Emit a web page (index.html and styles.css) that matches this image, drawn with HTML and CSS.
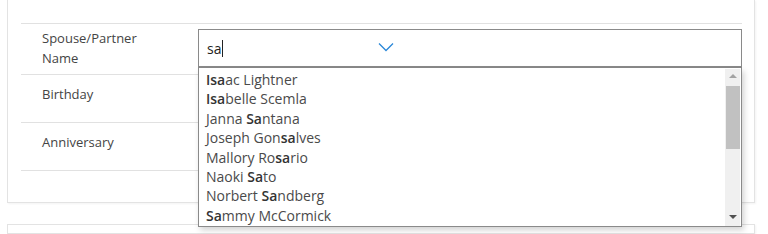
FILE: index.html
```html
<!DOCTYPE html>
<html>
<head>
	<meta charset="utf-8">
	<meta name="viewport" content="width=device-width, initial-scale=1">
	<title>Spouse/Partner Name</title>
	<link rel="stylesheet" href="styles.css">
</head>
<body>
	<div class="card">
		<div class="row row-first">
			<div class="label">Spouse/Partner<br>Name</div>
			<div class="field">
				<div class="combo">
					<span class="combo-text">sa</span><span class="caret"></span>
					<svg class="chevron" width="16" height="10" viewBox="0 0 16 10"><path d="M1 1.5 L8 8.5 L15 1.5" fill="none" stroke="#2b88d8" stroke-width="1.3"/></svg>
				</div>
				<div class="dropdown">
					<ul class="options">
						<li><b>Isa</b>ac Lightner</li>
						<li><b>Isa</b>belle Scemla</li>
						<li>Janna <b>Sa</b>ntana</li>
						<li>Joseph Gon<b>sa</b>lves</li>
						<li>Mallory Ro<b>sa</b>rio</li>
						<li>Naoki <b>Sa</b>to</li>
						<li>Norbert <b>Sa</b>ndberg</li>
						<li><b>Sa</b>mmy McCormick</li>
					</ul>
					<div class="scrollbar">
						<span class="arrow up"></span>
						<span class="thumb"></span>
						<span class="arrow down"></span>
					</div>
				</div>
			</div>
		</div>
		<div class="row">
			<div class="label">Birthday</div>
			<div class="field"></div>
		</div>
		<div class="row">
			<div class="label">Anniversary</div>
			<div class="field"></div>
		</div>
	</div>
	<div class="card card-next"></div>
</body>
</html>
```

FILE: styles.css
```css
body{margin: 0; background: #fff; font-family: "Open Sans", "Noto Sans", sans-serif; font-size: 13px; color: #444;}
.card{
	margin: 0 13px 0 7px;
	padding: 23px 12px 32px 13px;
	border: 1px solid #e3e3e3; border-top: none;
	box-shadow: 1px 1px 2px rgba(0,0,0,0.05);
	height: 147px;
}
.card-next{margin-top: 21px; border-top: 1px solid #e3e3e3; height: 8px; padding: 0;}

.row{display: flex; border-top: 1px solid #e1e1e1; height: 47px;}
.row-first{height: 50px;}
.row:last-child{border-bottom: 1px solid #e1e1e1;}
.label{width: 156px; padding: 9px 0 0 21px; line-height: 20px; flex: none;}
.row-first .label{padding-top: 4px;}
.field{flex: 1; position: relative;}

.combo{
	margin-top: 5px; height: 36px;
	border: 1px solid #8a8a8a; border-bottom-width: 2px;
	display: flex; align-items: center; padding-left: 8px;
	color: #222; position: relative;
}
.combo-text{font-size: 14px;}
.caret{display: inline-block; width: 1px; height: 17px; background: #222; margin-left: 1px;}
.chevron{position: absolute; left: 179px; top: 12px;}

.dropdown{
	position: absolute; left: 0; right: 0; top: 44px;
	height: 158px; background: #fff;
	border: 1px solid #8a8a8a; border-top: none;
	box-shadow: 2px 3px 6px rgba(0,0,0,0.18);
	display: flex; z-index: 2;
}
.options{list-style: none; margin: 0; padding: 2px 0 0 7px; flex: 1; overflow: hidden;}
.options li{height: 19.4px; line-height: 19.4px; font-size: 14px; color: #4a4a4a; white-space: nowrap;}
.options b{font-weight: 600; color: #333;}

.scrollbar{width: 15px; background: #f0f0f0; margin: 1px 1px 0 0; position: relative;}
.thumb{position: absolute; left: 1px; right: 0; top: 17px; height: 63px; background: #c1c1c1;}
.arrow{position: absolute; left: 4px; width: 0; height: 0; border-left: 4px solid transparent; border-right: 4px solid transparent;}
.arrow.up{top: 5px; border-bottom: 4px solid #a3a3a3;}
.arrow.down{bottom: 7px; border-top: 4px solid #505050;}
```
